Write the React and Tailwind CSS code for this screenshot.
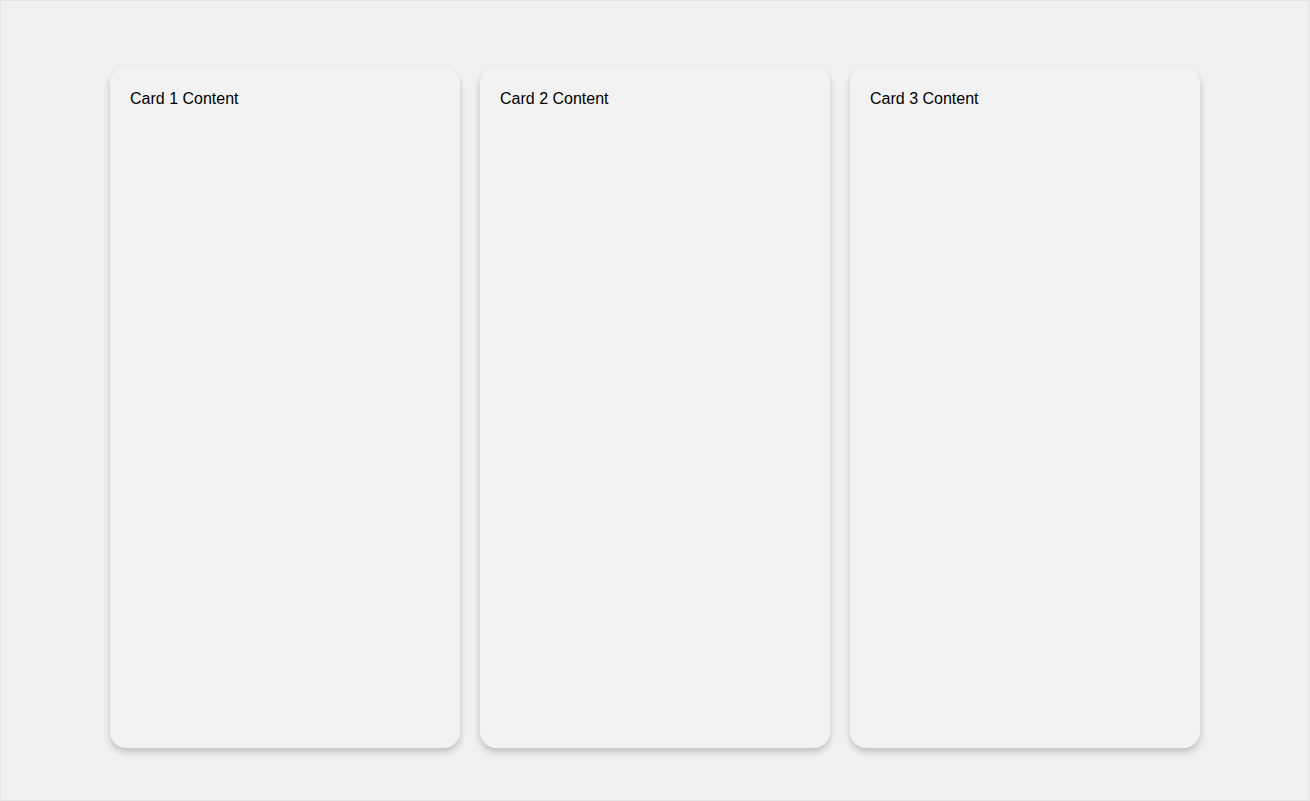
import React from "react";

const cards = ["Card 1 Content", "Card 2 Content", "Card 3 Content"];

const App = () => {
  return (
    <div className="h-[801px] w-full bg-[#f0f0f0] border border-[#e4e4e4] pt-[66px] font-['Liberation_Sans',Arial,sans-serif]">
      <div className="mx-auto grid w-[1090px] grid-cols-3 gap-[20px]">
        {cards.map((c) => (
          <div
            key={c}
            className="h-[681px] rounded-[16px] bg-[#f2f2f2] px-[20px] py-[20px] text-[16px] text-black shadow-[0_4px_6px_rgba(0,0,0,0.2)]"
          >
            {c}
          </div>
        ))}
      </div>
    </div>
  );
};

export default App;
